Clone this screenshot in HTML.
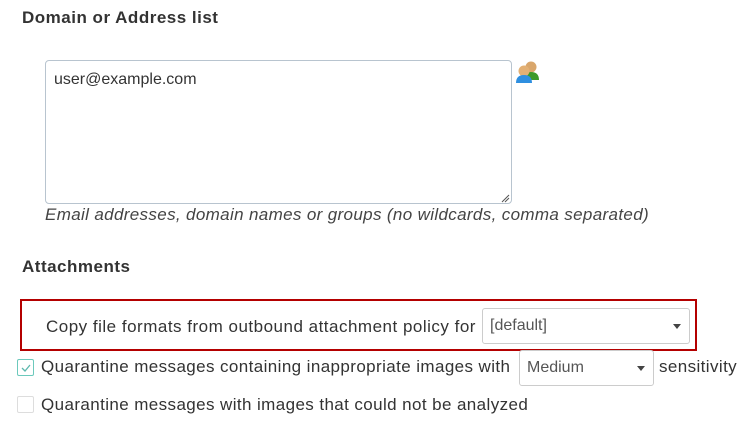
<!DOCTYPE html>
<html><head><style>
*{margin:0;padding:0;box-sizing:border-box}
body{width:753px;height:421px;background:#fff;font-family:"Liberation Sans",sans-serif;color:#333;position:relative;overflow:hidden}
.a{position:absolute;white-space:nowrap}
.h{font-weight:bold;font-size:17px;letter-spacing:0.5px;color:#333}
.t{font-size:17px;letter-spacing:0.5px}
.sel{position:absolute;border:1px solid #ccc;border-radius:3px;background:#fff;font-size:16px;color:#555}
.sel span{position:absolute;left:7px;top:50%;transform:translateY(-50%)}
.sel i{position:absolute;right:8px;top:50%;margin-top:-2px;border-left:4px solid transparent;border-right:4px solid transparent;border-top:5px solid #444}
.cb{position:absolute;width:17px;height:17px;border:1px solid #ddd;border-radius:2px;background:#fff}
</style></head><body>
<div class="a h" style="left:22px;top:8px">Domain or Address list</div>
<div class="a" style="left:45px;top:60px;width:467px;height:144px;border:1px solid #b8c4cf;border-radius:4px"></div>
<div class="a" style="left:54px;top:71px;font-size:16px;color:#333">user@example.com</div>
<svg class="a" style="left:500px;top:193px" width="10" height="10"><path d="M2 9L9 2M5 9L9 5" stroke="#555" stroke-width="1"/></svg>
<svg class="a" style="left:516px;top:61px" width="24" height="22">
<circle cx="15" cy="6" r="5.5" fill="#d9a66b"/><path d="M7 19 Q7 11 15 11 Q23 11 23 19Z" fill="#3c9a2a"/>
<circle cx="8" cy="10" r="5.5" fill="#e3b074"/><path d="M0 22 Q0 14 8 14 Q16 14 16 22Z" fill="#2f8fe0"/></svg>
<div class="a t" style="left:45px;top:205px;font-style:italic;color:#444;letter-spacing:0.35px">Email addresses, domain names or groups (no wildcards, comma separated)</div>
<div class="a h" style="left:22px;top:257px">Attachments</div>
<div class="a" style="left:20px;top:299px;width:677px;height:52px;border:2px solid #b40000"></div>
<div class="a t" style="left:46px;top:317px">Copy file formats from outbound attachment policy for</div>
<div class="sel" style="left:482px;top:308px;width:208px;height:36px"><span>[default]</span><i></i></div>
<div class="cb" style="left:17px;top:359px;border-color:#6cc9bc"></div>
<svg class="a" style="left:19px;top:361px" width="14" height="14"><path d="M3 7L6 10L11 4" stroke="#5bb8ad" stroke-width="1.3" fill="none"/></svg>
<div class="a t" style="left:41px;top:357px;letter-spacing:0.4px">Quarantine messages containing inappropriate images with</div>
<div class="sel" style="left:519px;top:350px;width:135px;height:36px"><span>Medium</span><i></i></div>
<div class="a t" style="left:659px;top:357px;letter-spacing:0.4px">sensitivity</div>
<div class="cb" style="left:17px;top:396px"></div>
<div class="a t" style="left:41px;top:395px;letter-spacing:0.4px">Quarantine messages with images that could not be analyzed</div>
</body></html>
